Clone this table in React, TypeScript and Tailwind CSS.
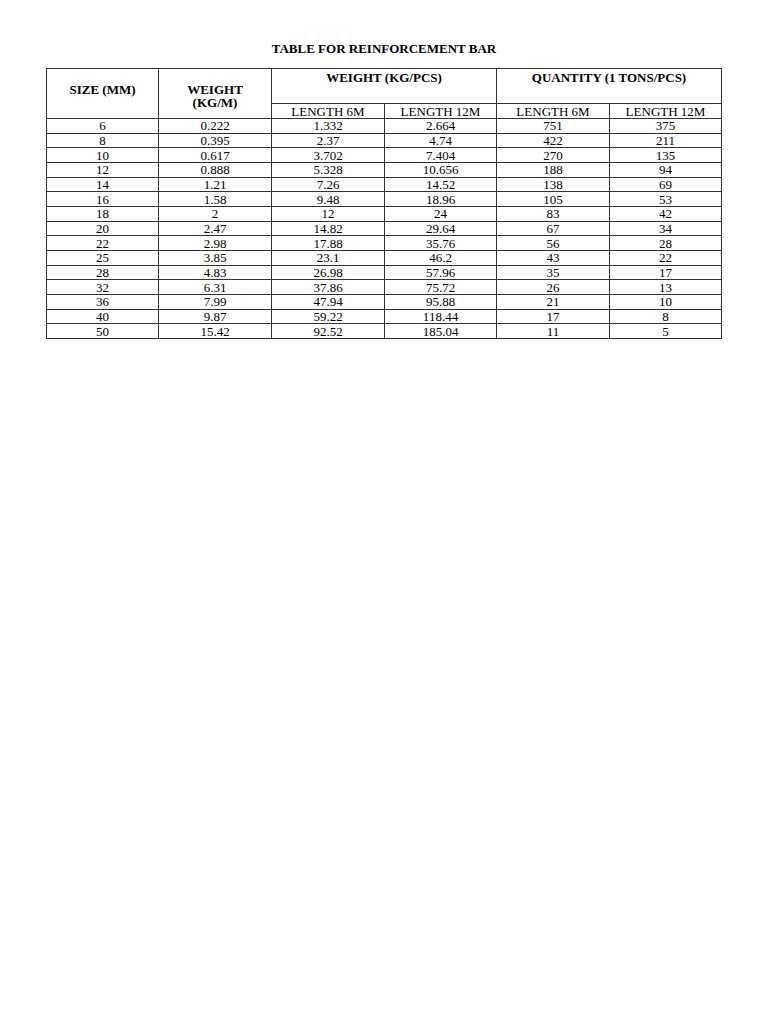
const rows: string[][] = [
  ['6', '0.222', '1.332', '2.664', '751', '375'],
  ['8', '0.395', '2.37', '4.74', '422', '211'],
  ['10', '0.617', '3.702', '7.404', '270', '135'],
  ['12', '0.888', '5.328', '10.656', '188', '94'],
  ['14', '1.21', '7.26', '14.52', '138', '69'],
  ['16', '1.58', '9.48', '18.96', '105', '53'],
  ['18', '2', '12', '24', '83', '42'],
  ['20', '2.47', '14.82', '29.64', '67', '34'],
  ['22', '2.98', '17.88', '35.76', '56', '28'],
  ['25', '3.85', '23.1', '46.2', '43', '22'],
  ['28', '4.83', '26.98', '57.96', '35', '17'],
  ['32', '6.31', '37.86', '75.72', '26', '13'],
  ['36', '7.99', '47.94', '95.88', '21', '10'],
  ['40', '9.87', '59.22', '118.44', '17', '8'],
  ['50', '15.42', '92.52', '185.04', '11', '5'],
];

const cell = 'border border-[#333] p-0 text-center align-middle';

export default function App() {
  return (
    <div className="w-[768px] h-[1024px] bg-white text-black font-['Liberation_Serif','Times_New_Roman',serif] pt-[42px]">
      <h1 className="text-center text-[13px] leading-[14px] font-bold">TABLE FOR REINFORCEMENT BAR</h1>
      <table className="ml-[46px] mt-[12px] w-[675px] table-fixed border-collapse text-[13px] leading-[13px]">
        <colgroup>
          <col className="w-[112px]" />
          <col className="w-[113px]" />
          <col className="w-[113px]" />
          <col className="w-[112px]" />
          <col className="w-[113px]" />
          <col className="w-[112px]" />
        </colgroup>
        <thead>
          <tr className="h-[35px]">
            <th rowSpan={2} className={`${cell} font-bold pb-[8px]`}>SIZE (MM)</th>
            <th rowSpan={2} className={`${cell} font-bold pt-[4px]`}>
              WEIGHT
              <br />
              (KG/M)
            </th>
            <th colSpan={2} className={`${cell} font-bold align-top pt-[2px]`}>WEIGHT (KG/PCS)</th>
            <th colSpan={2} className={`${cell} font-bold align-top pt-[2px]`}>QUANTITY (1 TONS/PCS)</th>
          </tr>
          <tr className="h-[15px]">
            <th className={`${cell} font-normal`}>LENGTH 6M</th>
            <th className={`${cell} font-normal`}>LENGTH 12M</th>
            <th className={`${cell} font-normal`}>LENGTH 6M</th>
            <th className={`${cell} font-normal`}>LENGTH 12M</th>
          </tr>
        </thead>
        <tbody>
          {rows.map((r) => (
            <tr key={r[0]} className="h-[14.67px]">
              {r.map((v, i) => (
                <td key={i} className={cell}>
                  {v}
                </td>
              ))}
            </tr>
          ))}
        </tbody>
      </table>
    </div>
  );
}
